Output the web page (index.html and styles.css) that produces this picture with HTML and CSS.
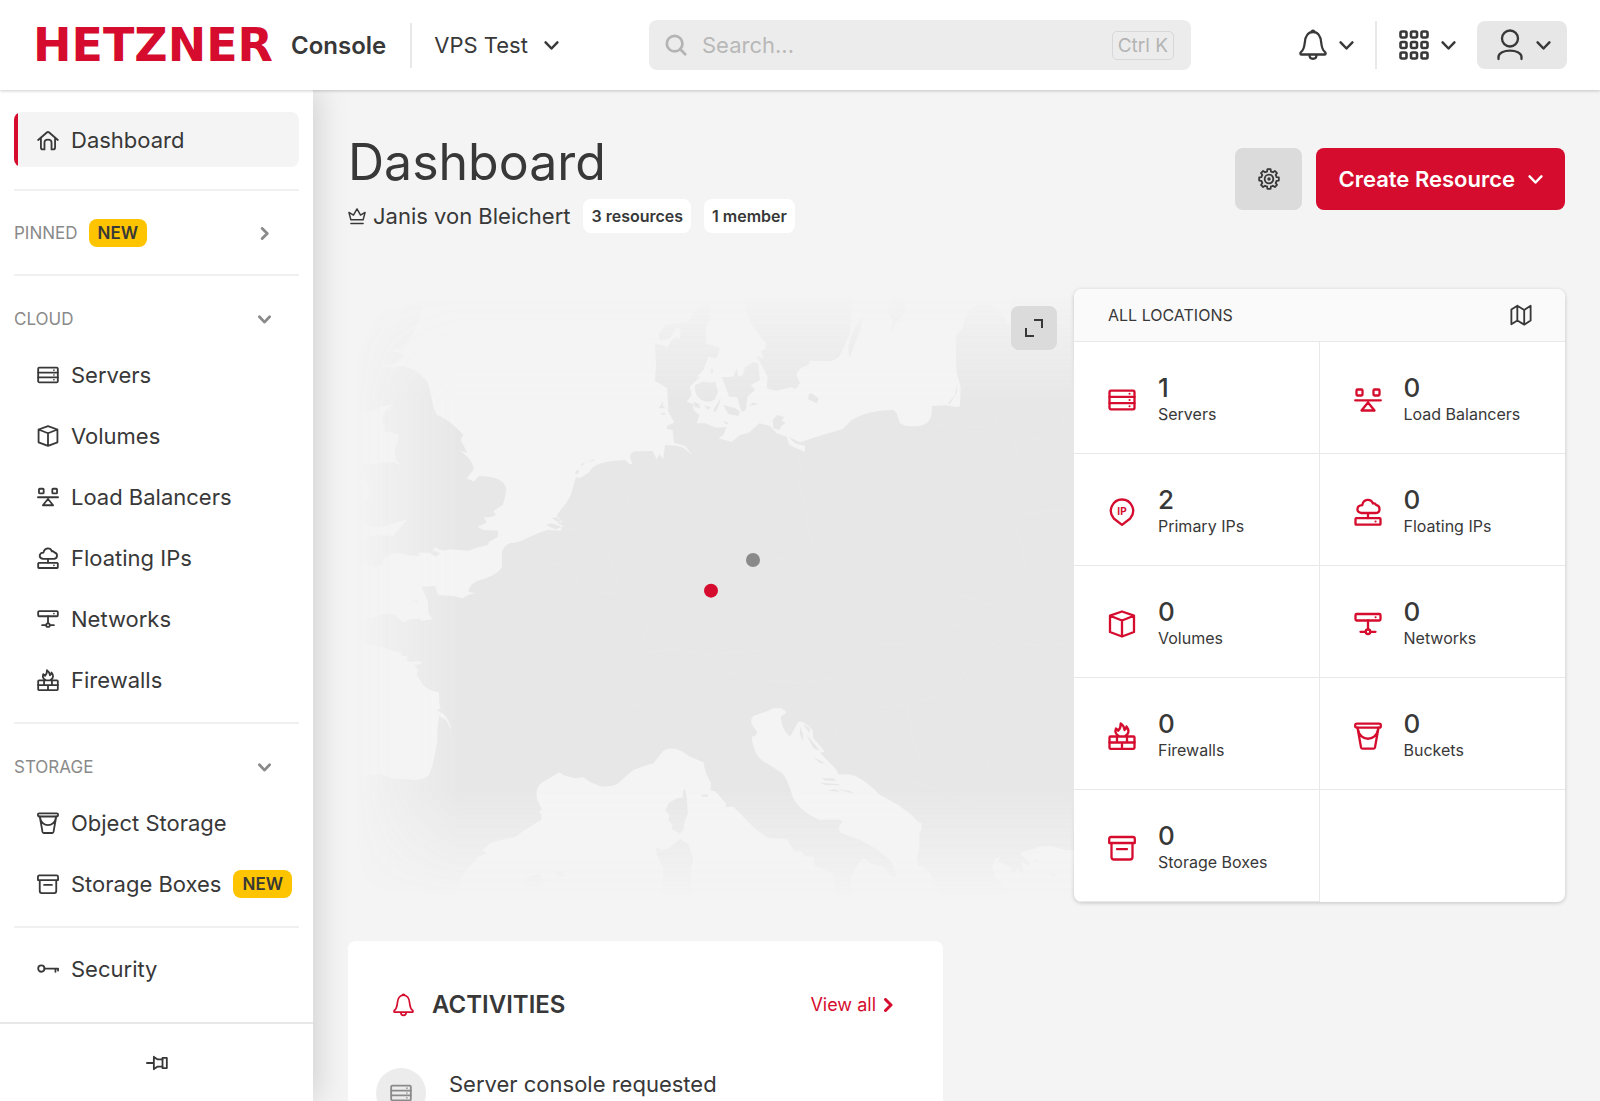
FILE: index.html
```html
<!DOCTYPE html>
<html lang="en">
<head>
<meta charset="utf-8">
<meta name="viewport" content="width=device-width, initial-scale=1">
<title>Dashboard – Hetzner Console</title>
<link rel="stylesheet" href="styles.css">
</head>
<body>
<svg class="sprite" aria-hidden="true">
  <symbol id="i-home" viewBox="0 0 28 28"><path d="M1.500 14 12.500 4.500Q14 3.200 15.500 4.500L26.500 14M5 11.500V23.500Q5 26 7.500 26H9.500V17.500Q9.500 13.500 14 13.500T18.500 17.500V26H20.500Q23 26 23 23.500V11.500"/></symbol>
  <symbol id="i-server" viewBox="0 0 28 28"><rect x="1.500" y="4.700" width="25" height="18.600" rx="1.500"/><path d="M1.500 10.900H26.500M1.500 17.100H26.500"/><path class="dot" d="M21.500 7.800h.1M21.500 14h.1M21.500 20.200h.1"/></symbol>
  <symbol id="i-cube" viewBox="0 0 28 28"><path d="M14 1.500 26 5.700V22L14 26.500 2 22V5.700ZM2 5.700 14 10.500 26 5.700M14 10.500V26.500"/></symbol>
  <symbol id="i-balance" viewBox="0 0 28 28"><rect x="2.500" y="3.500" width="6" height="6" rx="1"/><rect x="19.500" y="3.500" width="6" height="6" rx="1"/><path d="M1.200 14.300H26.800M14 16.500 20.500 24.500H7.500Z"/></symbol>
  <symbol id="i-floating" viewBox="0 0 28 28"><path d="M7.500 15H21.500C26.500 15 27 8 22 6.800C21.500 5.500 20.300 5.200 19 5.500C17 .5 9.500 .3 8.200 7.200C2.500 7.500 1.500 14 7.500 15ZM14 15V20"/><rect x="1.500" y="20.200" width="25" height="6.500" rx=".8"/><path class="dot" d="M21.500 23.400h.1"/></symbol>
  <symbol id="i-network" viewBox="0 0 28 28"><rect x="1.500" y="4" width="25" height="6.500" rx="1.200"/><path d="M14 10.500V19.300M6.500 21.800H11.500M16.500 21.800H21.500"/><circle cx="14" cy="21.800" r="2.300"/><path class="dot" d="M21.500 7.200h.1"/></symbol>
  <symbol id="i-firewall" viewBox="0 0 28 28"><rect x="1.500" y="14.500" width="25" height="12.300" rx="1"/><path d="M1.500 20.500H26.500M9 14.500V20.500M19 14.500V20.500M14 20.500V26.800M10.500 13.800C7.500 12 6.800 9.500 8 6.500C9 7 9.800 8 10.200 8.800C12 7 12.800 4.500 12.700 1.500C15 3 16.300 5 16.500 8C17.700 7.200 18.300 5.800 18.500 4.500C21 7.500 21.500 11.500 17.500 13.800"/></symbol>
  <symbol id="i-bucket" viewBox="0 0 28 28"><rect x="1.200" y="1.700" width="25.600" height="4" rx="1.500"/><path d="M3.500 5.700 7 25.300Q7.300 26.700 8.500 26.700H19.500Q20.700 26.700 21 25.300L24.500 5.700M3.800 7C6 20 22 20 24.200 7"/></symbol>
  <symbol id="i-box" viewBox="0 0 28 28"><path d="M1.200 9V5Q1.200 3 3 3H25Q26.800 3 26.800 5V9ZM3.500 9V23Q3.500 25.500 6 25.500H22Q24.500 25.500 24.500 23V9M9 15.200H19"/></symbol>
  <symbol id="i-key" viewBox="0 0 28 28"><circle cx="5.500" cy="13.500" r="4"/><path d="M9.500 13.500H26.800V16M23.500 13.500V17.500"/></symbol>
  <symbol id="i-pin" viewBox="0 0 28 28"><path d="M1.200 14H10M10 6V22M10 6.500 15 9.500H21M10 21.500 15 18.500H21"/><rect x="21" y="7.500" width="5.500" height="13"/></symbol>
  <symbol id="i-ip" viewBox="0 0 28 28"><path d="M14 26.800 5.800 20.500C-1 12.500 5 1.500 14 1.500S29 12.500 22.200 20.500Z"/><text class="ip-text" x="14" y="16.500" text-anchor="middle">IP</text></symbol>
  <symbol id="i-bell" viewBox="0 0 28 32"><path d="M2.200 25.500C1.200 25.500 1.100 23.800 2 23C4.500 21.500 5.200 19 5.800 13.500C6.300 7 9.500 3 14 3S21.700 7 22.200 13.500C22.800 19 23.500 21.500 26 23C26.900 23.800 26.800 25.500 25.800 25.500ZM12.500 2.500Q14 1 15.500 2.500M10.500 26C10.500 31 17.500 31 17.500 26"/></symbol>
  <symbol id="i-user" viewBox="0 0 28 32"><circle cx="14" cy="9.500" r="8"/><path d="M2.500 30V28C2.500 19.500 25.500 19.500 25.500 28V30"/></symbol>
  <symbol id="i-apps" viewBox="0 0 30 30"><path d="M1.500 3q0-1.500 1.500-1.500h3q1.500 0 1.500 1.500v3q0 1.500-1.500 1.500h-3q-1.500 0-1.500-1.500zM12 3q0-1.500 1.500-1.500h3q1.500 0 1.500 1.500v3q0 1.500-1.500 1.500h-3q-1.500 0-1.500-1.500zM22.500 3q0-1.500 1.500-1.500h3q1.500 0 1.500 1.500v3q0 1.500-1.500 1.500h-3q-1.500 0-1.500-1.500zM1.500 13.500q0-1.500 1.500-1.500h3q1.500 0 1.500 1.500v3q0 1.500-1.500 1.500h-3q-1.500 0-1.500-1.500zM12 13.500q0-1.500 1.500-1.500h3q1.500 0 1.500 1.500v3q0 1.500-1.500 1.500h-3q-1.500 0-1.500-1.500zM22.500 13.500q0-1.500 1.500-1.500h3q1.500 0 1.500 1.500v3q0 1.500-1.500 1.500h-3q-1.500 0-1.500-1.500zM1.500 24q0-1.500 1.500-1.500h3q1.500 0 1.500 1.500v3q0 1.500-1.500 1.500h-3q-1.500 0-1.500-1.500zM12 24q0-1.500 1.500-1.500h3q1.500 0 1.500 1.500v3q0 1.500-1.500 1.500h-3q-1.500 0-1.500-1.500zM22.500 24q0-1.500 1.500-1.500h3q1.500 0 1.500 1.500v3q0 1.500-1.500 1.500h-3q-1.500 0-1.500-1.500z"/></symbol>
  <symbol id="i-search" viewBox="0 0 24 24"><circle cx="10.500" cy="10.500" r="8.500"/><path d="M17 17 22 22"/></symbol>
  <symbol id="i-crown" viewBox="0 0 28 28"><path d="M4.500 20 1.500 8.500 8.500 12.500 14 3 19.500 12.500 26.500 8.500 23.500 20ZM4.500 25.500H23.500"/></symbol>
  <symbol id="i-gear" viewBox="0 0 28 28"><path d="M11.500 4.500 12 1.500H16L16.500 4.500Q17.800 4.800 19 5.500L21.500 3.800 24.200 6.500 22.500 9Q23.200 10.200 23.500 11.500L26.500 12V16L23.500 16.500Q23.200 17.800 22.500 19L24.200 21.500 21.500 24.200 19 22.500Q17.800 23.200 16.500 23.500L16 26.500H12L11.500 23.500Q10.200 23.200 9 22.500L6.500 24.200 3.800 21.500 5.500 19Q4.800 17.800 4.500 16.500L1.500 16V12L4.500 11.500Q4.800 10.200 5.500 9L3.800 6.500 6.500 3.800 9 5.500Q10.200 4.800 11.500 4.500Z"/><circle cx="14" cy="14" r="5.500"/><circle cx="14" cy="14" r="1"/></symbol>
  <symbol id="i-map" viewBox="0 0 24 24"><path d="M1.500 6 8 2V18L1.500 22ZM8 2 15.500 6.500V22.500L8 18M15.500 6.500 22.500 2V18L15.500 22.500"/></symbol>
  <symbol id="i-expand" viewBox="0 0 18 18"><path d="M9 1H17V9M1 9V17H9"/></symbol>
  <symbol id="i-down" viewBox="0 0 14 14"><path d="M1.500 4 7 9.800 12.500 4"/></symbol>
  <symbol id="i-right" viewBox="0 0 14 14"><path d="M4.500 1.500 10 7 4.500 12.500"/></symbol>
</svg>

<div class="app">
  <header class="topbar">
    <div class="brand">
      <a class="logo" href="#">HETZNER</a>
      <span class="product">Console</span>
      <button class="project" type="button">VPS Test <svg class="icon chev"><use href="#i-down"/></svg></button>
    </div>
    <label class="search">
      <svg class="icon search-icon" aria-hidden="true"><use href="#i-search"/></svg>
      <input type="search" placeholder="Search..." aria-label="Search">
      <kbd>Ctrl K</kbd>
    </label>
    <div class="tools">
      <button class="tool" type="button" aria-label="Notifications"><svg class="icon bell"><use href="#i-bell"/></svg><svg class="icon chev"><use href="#i-down"/></svg></button>
      <button class="tool apps" type="button" aria-label="Products"><svg class="icon grid-icon"><use href="#i-apps"/></svg><svg class="icon chev"><use href="#i-down"/></svg></button>
      <button class="tool account" type="button" aria-label="Account"><svg class="icon user"><use href="#i-user"/></svg><svg class="icon chev"><use href="#i-down"/></svg></button>
    </div>
  </header>

  <div class="body">
    <aside class="sidebar">
      <nav class="nav">
        <ul class="group">
          <li><a class="item active" href="#"><svg class="icon"><use href="#i-home"/></svg>Dashboard</a></li>
        </ul>
        <section class="group">
          <button class="heading closed" type="button"><span>PINNED</span><span class="badge">NEW</span><svg class="icon chev"><use href="#i-right"/></svg></button>
        </section>
        <section class="group">
          <button class="heading" type="button"><span>CLOUD</span><svg class="icon chev"><use href="#i-down"/></svg></button>
          <ul>
            <li><a class="item" href="#"><svg class="icon"><use href="#i-server"/></svg>Servers</a></li>
            <li><a class="item" href="#"><svg class="icon"><use href="#i-cube"/></svg>Volumes</a></li>
            <li><a class="item" href="#"><svg class="icon"><use href="#i-balance"/></svg>Load Balancers</a></li>
            <li><a class="item" href="#"><svg class="icon"><use href="#i-floating"/></svg>Floating IPs</a></li>
            <li><a class="item" href="#"><svg class="icon"><use href="#i-network"/></svg>Networks</a></li>
            <li><a class="item" href="#"><svg class="icon"><use href="#i-firewall"/></svg>Firewalls</a></li>
          </ul>
        </section>
        <section class="group">
          <button class="heading" type="button"><span>STORAGE</span><svg class="icon chev"><use href="#i-down"/></svg></button>
          <ul>
            <li><a class="item" href="#"><svg class="icon"><use href="#i-bucket"/></svg>Object Storage</a></li>
            <li><a class="item" href="#"><svg class="icon"><use href="#i-box"/></svg>Storage Boxes<span class="badge">NEW</span></a></li>
          </ul>
        </section>
        <ul class="group last">
          <li><a class="item" href="#"><svg class="icon"><use href="#i-key"/></svg>Security</a></li>
        </ul>
      </nav>
      <button class="unpin" type="button" aria-label="Pin sidebar"><svg class="icon"><use href="#i-pin"/></svg></button>
    </aside>

    <main class="main">
      <div class="page-head">
        <div>
          <h1>Dashboard</h1>
          <div class="meta">
            <svg class="icon crown"><use href="#i-crown"/></svg>
            <span class="owner">Janis von Bleichert</span>
            <span class="chip">3 resources</span>
            <span class="chip">1 member</span>
          </div>
        </div>
        <div class="actions">
          <button class="settings" type="button" aria-label="Settings"><svg class="icon"><use href="#i-gear"/></svg></button>
          <button class="create" type="button">Create Resource <svg class="icon chev"><use href="#i-down"/></svg></button>
        </div>
      </div>

      <div class="overview">
        <div class="map">
          <svg class="map-land" viewBox="24 27 2178 1839" preserveAspectRatio="xMidYMid slice" aria-hidden="true">
            <rect class="land" x="0" y="0" width="2240" height="1900"/>
            <g class="sea">
              <path d="M24 0V250C60 190 150 90 250 68Q240 130 205 180L185 205 150 212 188 222 187 236 160 252 118 258 165 263 185 257Q225 262 262 305C275 340 275 375 290 404Q325 415 370 465L362 480 382 518 340 508 360 512Q405 545 400 570L380 595 402 605 416 588C465 588 495 600 499 628Q495 655 488 675L460 693 468 705 450 712 432 712 440 728 412 740 430 750 474 752 474 770 448 785 442 796 415 802 385 812 330 808 310 812 283 802 278 818 236 818 238 828 205 826 175 818Q145 822 132 834L125 855 110 863 80 852 24 858V1030L60 1020 95 1012 145 1000 168 1008 190 1028 210 1018 238 1016 245 1022 278 1018 265 1000 264 965 245 920 285 918 294 945 340 948 368 955 385 945 405 940 385 935Q386 918 410 904C440 895 470 885 486 862V815Q495 790 515 789C550 787 560 770 622 750L665 752 662 742 672 740 650 728 668 726 650 708Q660 690 670 680 695 650 698 625L708 592 720 595 745 578 760 560Q790 542 855 540L868 552 878 553 870 530Q872 516 885 514L938 513 950 538 958 522 970 537 975 495 1010 497 1030 503 1058 526 1035 498 1002 488 998 450 980 446 982 437 1003 428 985 395 982 325 945 303 948 260 945 190 982 202 995 180 1012 172 1020 178 1022 145 1008 142Q995 182 960 182L955 165 975 135 1045 125 1065 90 1108 65 1113 110 1098 140V190L1140 205 1130 235 1105 230 1090 270 1070 290 1080 290 1050 320 1055 345 1040 365 1060 372 1060 390 1078 405 1070 430 1095 430 1130 443 1160 440 1150 465 1135 475 1175 485 1200 465 1225 460 1258 430 1290 438 1310 460 1340 470 1348 495 1395 516V498L1365 490 1345 470 1380 487 1430 470 1508 447 1535 420Q1590 388 1660 390L1670 400 1680 430Q1700 443 1740 437T1775 378L1818 376 1850 382 1860 378 1862 320 1850 280Q1846 225 1849 165L1870 140Q1875 85 1920 72T2010 140L2010 0H1540L1530 160 1510 205Q1495 250 1460 243L1410 242 1405 255Q1360 270 1373 295L1380 310 1368 326 1350 322 1310 332 1280 325 1283 290 1250 228 1272 235 1262 213 1275 208 1278 190 1235 135Q1205 85 1205 0Z"/>
              <path d="M24 395H95L120 380 160 373 140 390Q125 405 127 425L135 455 175 462V480L163 510 168 540 182 555 155 545 100 552 75 550 60 575 24 580ZM24 610 70 595 92 620 90 650 70 675 24 680ZM24 740 60 715 90 738Q115 745 145 735L203 718 160 767 100 765 60 785 24 800Z"/>
              <path d="M24 1080H65L75 1095 105 1095 160 1112 185 1118 183 1126 205 1130 197 1140 210 1146 235 1143 250 1150 222 1155 234 1170 230 1185 252 1218Q275 1235 297 1237L298 1270 302 1285 290 1292Q325 1300 335 1352L318 1320 298 1308 292 1345V1380L285 1420Q275 1475 265 1487 235 1505 205 1498L155 1495 125 1483 24 1490Z"/>
              <path d="M340 1890 360 1800 385 1765 415 1730 438 1720 428 1710 450 1690Q490 1675 525 1672L550 1653 603 1620 605 1605 597 1595 606 1588 592 1560Q583 1525 605 1508L658 1477 670 1485 705 1495 730 1492 755 1508 780 1518Q825 1525 845 1500L880 1470Q910 1458 940 1450L970 1412Q995 1398 1028 1415L1050 1430 1090 1447 1098 1480 1113 1510 1112 1532 1125 1533 1158 1570 1155 1580 1180 1580 1205 1605Q1260 1665 1290 1675L1340 1677 1362 1712 1385 1715 1395 1728 1420 1730 1425 1757 1475 1777 1505 1890H1530L1533 1790 1555 1750 1572 1735 1590 1750 1630 1760 1650 1785 1665 1793Q1675 1765 1640 1730L1605 1705 1560 1680 1505 1660Q1490 1650 1500 1635L1508 1625Q1508 1615 1440 1620 1380 1595 1360 1555 1340 1490 1325 1478L1280 1450Q1240 1430 1235 1370L1245 1368 1252 1355Q1222 1325 1240 1308L1290 1290 1300 1285H1325L1340 1297 1322 1310Q1325 1350 1350 1370L1375 1325Q1390 1320 1418 1350L1420 1375 1455 1415 1440 1418 1490 1470 1495 1483H1525Q1560 1485 1620 1545L1675 1575 1715 1605Q1735 1630 1745 1630V1645L1738 1660V1705L1730 1735 1735 1755Q1770 1770 1780 1800L1810 1860V1890Z"/>
              <path d="M2010 1890 2005 1840 1965 1790 1957 1765Q1960 1735 1980 1730L1975 1745 2010 1760 2018 1785 2030 1765 2050 1785 2045 1745 2075 1762 2060 1740 2040 1720 2085 1705 2100 1700 2130 1698 2180 1710H2202V1890Z"/>
            </g>
            <g class="land">
              <path d="M1065 315 1090 305 1110 308 1125 305 1134 335 1125 358Q1110 370 1090 362 1062 350 1065 315ZM1145 292 1180 290 1190 265 1195 290 1208 285 1215 262 1240 246 1255 250 1258 285 1260 300 1233 315 1245 330 1222 350 1218 390 1205 395 1198 375 1192 352 1167 350 1155 315ZM1150 375 1185 385 1200 395 1195 408 1165 402ZM1060 365 1078 372 1080 385 1065 382ZM1120 390 1142 355 1138 372 1125 398ZM1092 376 1112 382 1105 390ZM1226 378 1240 367 1255 374 1238 376ZM1148 422 1165 428 1160 434ZM1298 420 1312 404 1322 408 1332 412 1325 422 1337 428 1325 438 1318 450 1300 445ZM1405 345 1412 338 1436 355 1430 370 1405 358ZM1570 105 1560 150 1540 205 1528 235 1524 200 1540 150ZM1650 65 1680 48 1697 60 1695 100 1670 125 1652 155 1660 120 1643 100ZM1822 372 1845 345 1853 305 1850 340 1830 370ZM705 580 710 570 718 572 712 583ZM718 558 735 545 730 555ZM740 545 765 538 760 543ZM957 385 970 362 968 378 978 385ZM962 400 972 398 978 404 968 405ZM618 735 635 730 665 742 645 748ZM635 715 650 712 663 722 655 727ZM270 820 285 812 300 820 288 830ZM218 962 235 962 232 968ZM1112 265 1120 270 1115 285Z"/>
              <path d="M977 1590 985 1570 1010 1555 1028 1552 1030 1530 1035 1528 1040 1550 1044 1600 1034 1625 1030 1650 1020 1663 995 1648 998 1635 985 1622 988 1605ZM948 1700Q965 1715 985 1705L1020 1677 1045 1692 1060 1735 1053 1770 1052 1860H965L970 1765 950 1725ZM545 1810 565 1790 600 1782 605 1795 620 1800 590 1832ZM645 1780 660 1773 680 1788 660 1790ZM1083 1545 1105 1543 1103 1550H1088ZM1380 1340 1388 1360 1390 1385 1380 1365ZM1400 1365 1412 1378 1440 1412 1420 1405ZM1388 1332 1410 1345 1408 1358ZM1418 1430 1440 1450 1455 1450ZM1445 1495H1480L1490 1502H1455ZM1440 1508 1495 1512 1500 1516 1455 1515ZM1460 1532 1485 1528 1500 1535ZM1490 1527 1530 1533 1545 1542ZM2013 1720 2025 1714 2030 1722 2020 1728ZM2080 1740 2092 1738 2095 1745ZM2130 1780 2150 1782 2140 1792Z"/>
            </g>
            <g class="border">
              <path d="M555 785Q575 820 625 835L640 855H665L670 890 700 870 715 910M780 785 810 830 820 880 835 915M665 745 740 750 800 770M790 715 860 685 870 640 845 625M750 935 825 940 860 970 940 990 920 1030 908 1100M1040 1110 1100 1125 1140 1120 1200 1115 1285 1110M1375 530Q1395 580 1370 600L1405 690 1400 740 1425 800 1330 840 1290 835M1425 790 1500 825 1600 870 1700 930 1800 970 1860 945 1970 980M2020 480 2050 580 2000 650 2030 740 2060 860M1770 435 1960 442 1975 400M2030 490 2160 460 2175 400M2050 700 2190 690"/>
              <path d="M845 1280 920 1270 950 1230 1000 1250 1030 1210 1090 1220 1130 1190 1220 1170 1270 1200 1400 1210 1490 1190 1530 1130M900 1120 1000 1105 1060 1120 1130 1170M1540 1215 1620 1280 1700 1275 1800 1245 1860 1200 1910 1130 1980 1080 2110 1100 2200 1085M1480 1340Q1520 1440 1600 1520M1700 1275 1720 1380 1740 1440 1700 1500 1800 1530 1900 1570M1820 1270 1900 1360 1980 1400 1940 1450 1960 1490M1560 1060 1600 1095 1700 1090 1780 1050 1880 1030 1930 1040"/>
            </g>
            <g class="pins"><circle class="pin-idle" cx="1239" cy="840" r="21"/><circle class="pin-active" cx="1113" cy="932" r="21"/></g>
          </svg>
          <button class="expand" type="button" aria-label="Expand map"><svg class="icon"><use href="#i-expand"/></svg></button>
        </div>

        <section class="stats">
          <header><h2>ALL LOCATIONS</h2><svg class="icon"><use href="#i-map"/></svg></header>
          <div class="cells">
            <a class="cell" href="#"><svg class="icon"><use href="#i-server"/></svg><span><b>1</b>Servers</span></a>
            <a class="cell" href="#"><svg class="icon"><use href="#i-balance"/></svg><span><b>0</b>Load Balancers</span></a>
            <a class="cell" href="#"><svg class="icon"><use href="#i-ip"/></svg><span><b>2</b>Primary IPs</span></a>
            <a class="cell" href="#"><svg class="icon"><use href="#i-floating"/></svg><span><b>0</b>Floating IPs</span></a>
            <a class="cell" href="#"><svg class="icon"><use href="#i-cube"/></svg><span><b>0</b>Volumes</span></a>
            <a class="cell" href="#"><svg class="icon"><use href="#i-network"/></svg><span><b>0</b>Networks</span></a>
            <a class="cell" href="#"><svg class="icon"><use href="#i-firewall"/></svg><span><b>0</b>Firewalls</span></a>
            <a class="cell" href="#"><svg class="icon"><use href="#i-bucket"/></svg><span><b>0</b>Buckets</span></a>
            <a class="cell" href="#"><svg class="icon"><use href="#i-box"/></svg><span><b>0</b>Storage Boxes</span></a>
          </div>
        </section>
      </div>

      <div class="panels">
        <section class="activities">
          <header>
            <svg class="icon bell"><use href="#i-bell"/></svg>
            <h2>ACTIVITIES</h2>
            <a class="view-all" href="#">View all <svg class="icon"><use href="#i-right"/></svg></a>
          </header>
          <ul>
            <li class="activity"><span class="avatar"><svg class="icon"><use href="#i-server"/></svg></span><span>Server console requested</span></li>
          </ul>
        </section>
      </div>
    </main>
  </div>
</div>
</body>
</html>
```
FILE: styles.css
```css
:root {
  --red: #d50c2d;
  --ink: #383838;
  --muted: #8a8a8a;
  --line: #e8e8e8;
  --page: #f4f4f4;
  --yellow: #ffc400;
}

* { box-sizing: border-box; }

body {
  margin: 0;
  background: var(--page);
  color: var(--ink);
  font-family: Inter, "Liberation Sans", sans-serif;
  font-size: 22px;
  line-height: 28px;
}

button, input { font: inherit; color: inherit; }
button { border: 0; padding: 0; background: none; cursor: pointer; }
a { color: inherit; text-decoration: none; }
ul { list-style: none; margin: 0; padding: 0; }
h1, h2 { margin: 0; }

.sprite { display: none; }

/* Stroke widths are in the units of each symbol's own grid */
.icon {
  display: block;
  flex: none;
  width: 22px;
  height: 22px;
  fill: none;
  stroke: currentColor;
  stroke-width: 2.3;
  stroke-linecap: round;
  stroke-linejoin: round;
}
.dot { stroke-width: 2; }
.ip-text { font: 700 10px Inter, sans-serif; fill: currentColor; stroke: none; }
.icon.chev { width: 15px; height: 15px; }

.app { display: flex; flex-direction: column; height: 100vh; }

/* Top bar */
.topbar {
  position: relative;
  z-index: 2;
  flex: none;
  display: grid;
  grid-template-columns: 616px minmax(200px, 542px) 1fr;
  align-items: center;
  height: 90px;
  padding: 0 33px;
  background: #fff;
  box-shadow: 0 1px 3px rgba(0, 0, 0, .2);
}
.brand { display: flex; align-items: center; }
.logo {
  width: 258px;
  color: var(--red);
  font: 700 46px/48px "DejaVu Sans", sans-serif;
}
.product {
  padding-right: 24px;
  border-right: 2px solid var(--line);
  font-size: 24px;
  font-weight: 600;
  line-height: 45px;
}
.project { display: flex; align-items: center; gap: 16px; padding-left: 22px; }

.search {
  display: flex;
  align-items: center;
  gap: 15px;
  height: 50px;
  padding: 0 17px 0 16px;
  border-radius: 8px;
  background: #ececec;
  color: #b4b4b4;
}
.search-icon { stroke-width: 3; }
.search input {
  flex: 1;
  min-width: 0;
  padding: 0;
  border: 0;
  outline: 0;
  background: none;
}
.search input::placeholder { color: #b8b8b8; opacity: 1; }
kbd {
  padding: 0 5px;
  border: 1px solid #d8d8d8;
  border-radius: 5px;
  font: 19px/27px Inter, sans-serif;
}

.tools { display: flex; justify-content: flex-end; align-items: center; }
.tool { display: flex; align-items: center; gap: 12px; height: 48px; }
.tool .bell { width: 28px; height: 32px; }
.tool .grid-icon { width: 30px; height: 30px; stroke-width: 2.6; }
.tool .user { width: 28px; height: 32px; }
.apps { margin-left: 21px; padding: 0 21px 0 22px; border-left: 2px solid var(--line); }
.account { gap: 12px; padding: 0 16px 0 19px; border-radius: 8px; background: #e7e7e7; }

/* Sidebar */
.body { flex: 1; display: flex; min-height: 0; }
.sidebar {
  position: relative;
  z-index: 1;
  flex: none;
  display: flex;
  flex-direction: column;
  width: 313px;
  background: #fff;
  box-shadow: 4px 0 30px rgba(0, 0, 0, .15);
}
.nav { flex: 1; min-height: 0; padding: 19px 14px 0; overflow-y: auto; scrollbar-width: none; }
.group { border-bottom: 2px solid #f0f0f0; padding-bottom: 12px; }
.group:first-child { padding-bottom: 19px; }
.group.last { padding-top: 10px; border-bottom: 0; }
.group li { padding: 3px 0; }
.item {
  display: flex;
  align-items: center;
  gap: 12px;
  height: 55px;
  padding-left: 23px;
  border-radius: 8px;
}
.item.active { background: linear-gradient(to right, var(--red) 4px, var(--page) 4px); }
.badge {
  padding: 0 9px;
  border-radius: 8px;
  background: var(--yellow);
  color: var(--ink);
  font-size: 17px;
  font-weight: 600;
  line-height: 28px;
}
.heading {
  display: flex;
  align-items: center;
  gap: 11px;
  width: 100%;
  padding: 29px 28px 11px 0;
  color: var(--muted);
  font-size: 17px;
}
.heading.closed { padding: 28px 28px 15px 0; }
.heading .icon.chev { width: 13px; height: 13px; margin-left: auto; stroke-width: 3; }
.unpin {
  flex: none;
  display: flex;
  justify-content: center;
  align-items: center;
  height: 79px;
  border-top: 2px solid var(--line);
}

/* Main column */
.main { flex: 1; min-width: 0; padding: 42px 35px 0; overflow-y: auto; scrollbar-width: none; }
.page-head { display: flex; justify-content: space-between; align-items: flex-start; }
h1 { font-size: 50px; font-weight: 400; line-height: 60px; }
.meta { display: flex; align-items: center; gap: 13px; margin-top: 7px; }
.crown { width: 18px; height: 18px; margin-right: -6px; }
.chip {
  padding: 0 8px;
  border-radius: 8px;
  background: #fff;
  font-size: 16px;
  font-weight: 600;
  line-height: 34px;
}
.actions { display: flex; gap: 14px; margin-top: 16px; }
.settings {
  display: flex;
  justify-content: center;
  align-items: center;
  width: 67px;
  height: 62px;
  border-radius: 8px;
  background: #dbdbdb;
}
.create {
  display: flex;
  align-items: center;
  gap: 13px;
  height: 62px;
  padding: 0 22px;
  border-radius: 8px;
  background: var(--red);
  color: #fff;
  font-weight: 600;
}

.overview { display: grid; grid-template-columns: minmax(0, 1fr) 491px; margin-top: 56px; }

/* Location map, faded out at its top, left and bottom edges */
.map { position: relative; min-height: 0; }
.map-land {
  display: block;
  width: 100%;
  height: 613px;
  -webkit-mask-image: linear-gradient(to right, transparent 6px, #000 110px), linear-gradient(to bottom, transparent 6px, #000 111px, #000 501px, transparent 608px);
  mask-image: linear-gradient(to right, transparent 6px, #000 110px), linear-gradient(to bottom, transparent 6px, #000 111px, #000 501px, transparent 608px);
  -webkit-mask-composite: source-in;
  mask-composite: intersect;
}
.land { fill: #e7e7e7; }
.sea { fill: #f4f4f4; }
.border { fill: none; stroke: #eaeaea; stroke-width: 2; }
.pin-idle { fill: #8a8a8a; }
.pin-active { fill: var(--red); }
.expand {
  position: absolute;
  top: 17px;
  right: 17px;
  display: flex;
  justify-content: center;
  align-items: center;
  width: 46px;
  height: 44px;
  border-radius: 8px;
  background: #dbdbdb;
}
.expand .icon { width: 18px; height: 18px; stroke-width: 2; stroke-linecap: butt; stroke-linejoin: miter; }

.stats {
  align-self: start;
  overflow: hidden;
  border-radius: 8px;
  background: #fff;
  box-shadow: 0 1px 4px rgba(0, 0, 0, .2);
}
.stats header {
  display: flex;
  justify-content: space-between;
  align-items: center;
  height: 53px;
  padding: 0 33px 0 34px;
  border-bottom: 1px solid var(--line);
  background: #fafafa;
}
.stats header .icon { stroke-width: 2; }
.stats h2 { font-size: 16px; font-weight: 400; }
.cells { display: grid; grid-template-columns: 1fr 1fr; grid-auto-rows: 112px; }
.cell {
  display: flex;
  align-items: center;
  gap: 22px;
  padding: 5px 0 0 34px;
  border-bottom: 1px solid var(--line);
  font-size: 16px;
  line-height: 22px;
}
.cell span { padding-bottom: 2px; }
.cell:nth-child(odd) { border-right: 1px solid var(--line); }
.cell .icon { width: 28px; height: 28px; color: var(--red); }
.cell b { display: block; font-size: 26px; font-weight: 500; line-height: 30px; }

/* Activities */
.panels { display: grid; grid-template-columns: 595px; margin-top: 39px; }
.activities { padding: 50px 28px 28px; border-radius: 8px; background: #fff; }
.activities header { display: flex; align-items: center; padding: 0 20px 0 17px; }
.activities .bell { width: 21px; height: 24px; color: var(--red); }
.activities h2 { margin-left: 18px; font-size: 24px; font-weight: 600; }
.view-all { display: flex; align-items: center; gap: 5px; margin-left: auto; color: var(--red); font-size: 18px; }
.view-all .icon { width: 14px; height: 14px; stroke-width: 3; }
.activities ul { margin-top: 49px; }
.activity { display: flex; gap: 23px; line-height: 32px; }
.avatar {
  display: flex;
  justify-content: center;
  align-items: center;
  width: 50px;
  height: 50px;
  border-radius: 50%;
  background: #ececec;
  color: var(--muted);
}
```
